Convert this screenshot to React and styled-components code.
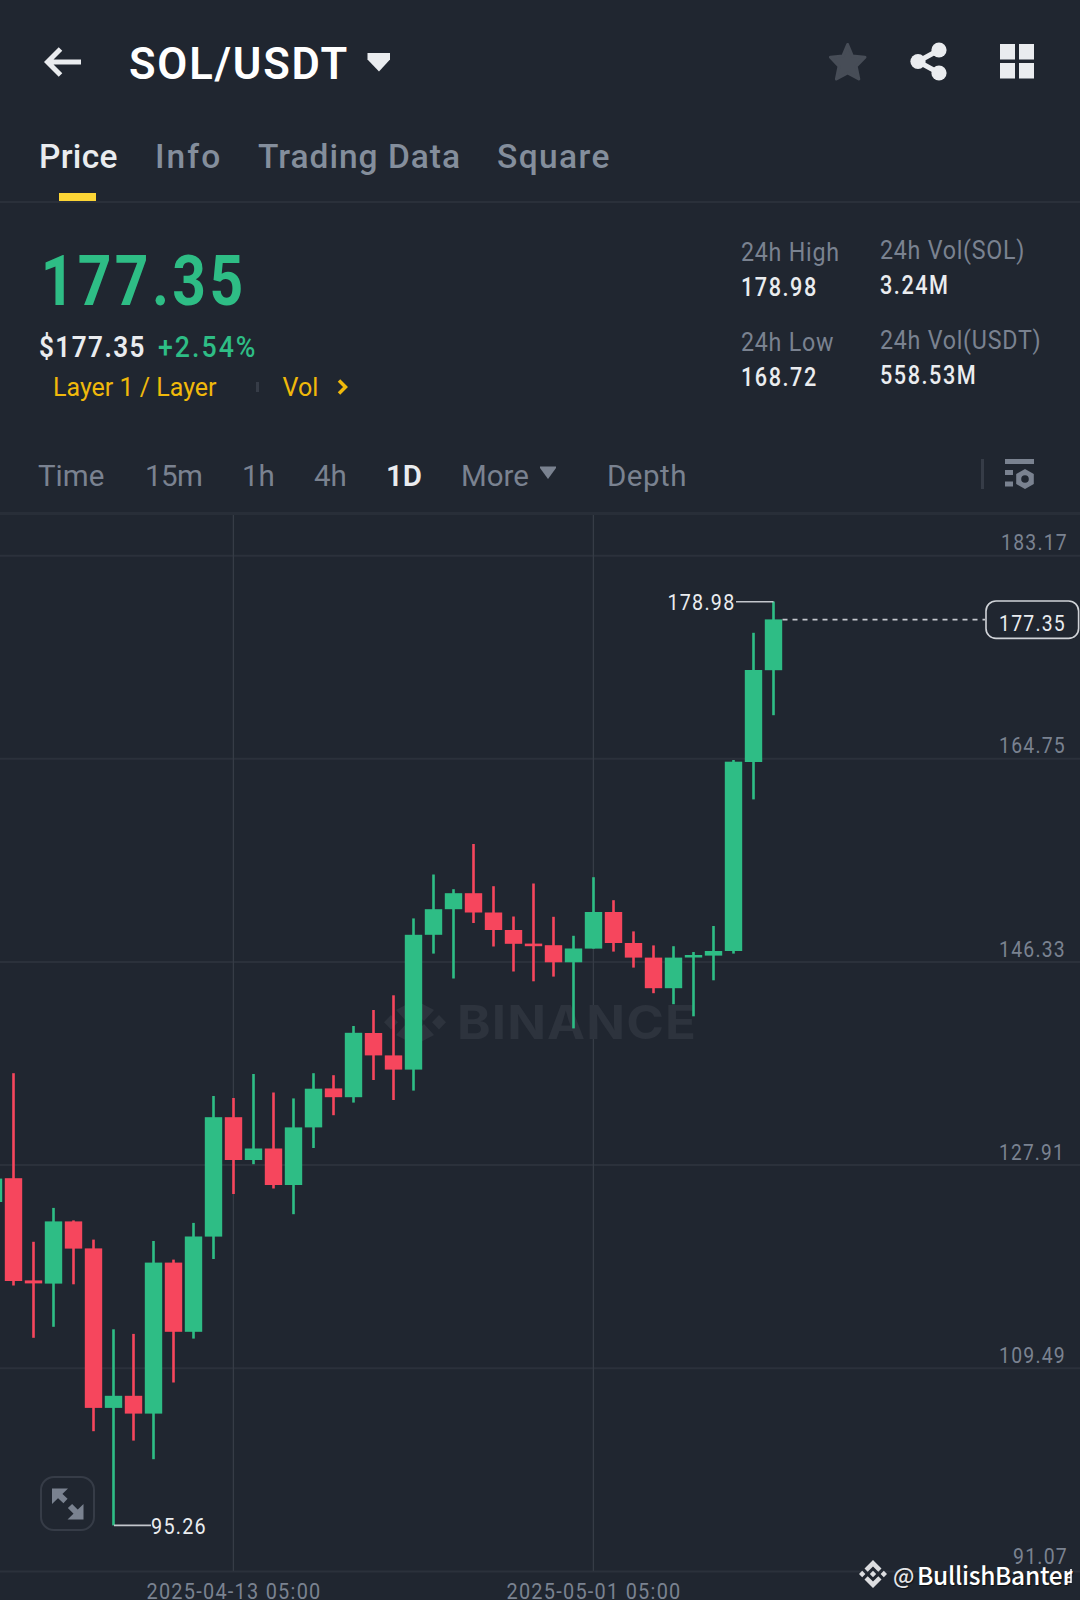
import React from "react";
import styled, { createGlobalStyle } from "styled-components";

const GlobalStyle = createGlobalStyle`
  * {
    box-sizing: border-box;
  }
  body {
    margin: 0;
    background: #202630;
    font-family: Roboto, "Liberation Sans", sans-serif;
    overflow: hidden;
  }
`;

const Page = styled.div`
  width: 1080px;
  height: 1600px;
  overflow: hidden;
  background: #202630;
  color: #eaecef;
`;

// Header
const Header = styled.header`
  display: flex;
  align-items: center;
  height: 124px;
  padding: 0 46px 0 44px;
`;

const Pair = styled.h1`
  margin: 5px 0 0 47px;
  width: 237px;
  font-size: 43.5px;
  font-weight: 600;
  letter-spacing: 1.8px;
  white-space: nowrap;
  color: #ffffff;
`;

const Actions = styled.div`
  display: flex;
  align-items: center;
  margin-left: auto;
`;

const Icon = styled.svg`
  display: block;
  flex: none;
  margin-left: ${props => props.$left || 0}px;
`;

// Tabs
const Tabs = styled.nav`
  display: flex;
  height: 79px;
  padding: 11px 0 0 39px;
  border-bottom: 2px solid #2a303a;
`;

const Tab = styled.div`
  width: ${props => props.$width}px;
  height: 67px;
  font-size: 33.5px;
  line-height: 44px;
  font-weight: 500;
  letter-spacing: ${props => props.$spacing}px;
  white-space: nowrap;
  color: ${props => (props.$active ? "#eaecef" : "#848e9c")};
`;

const Underline = styled.div`
  width: 37px;
  height: 8px;
  margin: 14px 0 0 20px;
  background: #fcd535;
`;

// Price summary
const Summary = styled.section`
  display: flex;
  justify-content: space-between;
  height: 233px;
  padding: 30px 0 0 39px;
`;

const LastPrice = styled.div`
  height: 88px;
  padding-left: 2px;
  font-size: 69.5px;
  line-height: 97px;
  font-weight: 700;
  letter-spacing: 4px;
  color: #2ebd85;
  transform: scaleX(0.845);
  transform-origin: left;
`;

const SubPrice = styled.div`
  display: flex;
  height: 41px;
  line-height: 52px;
  font-size: 29px;
`;

const Fiat = styled.span`
  width: 119px;
  font-weight: 600;
  letter-spacing: 1.6px;
  transform: scaleX(0.9);
  transform-origin: left;
`;

const Change = styled.span`
  font-weight: 500;
  letter-spacing: 2.2px;
  color: #2ebd85;
  transform: scaleX(0.92);
  transform-origin: left;
`;

const Tags = styled.div`
  display: flex;
  align-items: center;
  height: 50px;
  padding-left: 14px;
  font-size: 25px;
  color: #f0b90b;
`;

const TagDivider = styled.div`
  width: 3px;
  height: 10px;
  margin: 0 24px 0 39px;
  background: #363c47;
`;

const Stats = styled.div`
  display: flex;
`;

const StatColumn = styled.div`
  width: ${props => props.$width}px;
  margin-top: ${props => props.$top}px;
`;

const Stat = styled.div`
  height: 90px;
  white-space: nowrap;
`;

const StatLabel = styled.div`
  font-size: 25px;
  line-height: 35px;
  letter-spacing: 0.8px;
  color: #7a8290;
  transform: scaleX(0.93);
  transform-origin: left;
`;

const StatValue = styled.div`
  font-size: 25px;
  line-height: 35px;
  font-weight: 500;
  letter-spacing: 1.8px;
  transform: scaleX(0.865);
  transform-origin: left;
`;

// Interval bar
const Intervals = styled.div`
  display: flex;
  align-items: center;
  height: 79px;
  padding: 0 46px 0 38px;
  border-bottom: 3px solid #282e38;
`;

const Interval = styled.div`
  width: ${props => props.$width}px;
  margin-left: ${props => props.$left || 0}px;
  padding-top: 3px;
  font-size: 29.5px;
  line-height: 40px;
  letter-spacing: ${props => props.$spacing || 0}px;
  font-weight: ${props => (props.$active ? 600 : 400)};
  color: ${props => (props.$active ? "#eaecef" : "#7a8290")};
`;

const BarDivider = styled.div`
  width: 3px;
  height: 30px;
  margin: 0 21px 0 auto;
  background: #363c47;
`;

// Chart
const ChartArea = styled.main`
  position: relative;
  height: 1085px;
`;

const ChartSvg = styled.svg`
  display: block;
`;

const Expand = styled.button`
  position: absolute;
  left: 40px;
  top: 961px;
  width: 55px;
  height: 55px;
  padding: 0;
  display: flex;
  align-items: center;
  justify-content: center;
  border: 2px solid #363c47;
  border-radius: 14px;
  background: transparent;
`;

const Signature = styled.div`
  position: absolute;
  left: 859px;
  top: 1041px;
  display: flex;
  align-items: center;
  height: 36px;
  white-space: nowrap;
  color: #ffffff;
  font-family: "Noto Sans CJK SC", "Noto Sans", sans-serif;
  font-size: 24.5px;
  font-weight: 500;
  text-shadow: 1px 1px 1px rgba(0, 0, 0, 0.6);
`;

const At = styled.span`
  width: 24px;
  margin-left: 6px;
  font-size: 22px;
  color: #e4e5e7;
`;

const Author = styled.span`
  position: relative;
  letter-spacing: -0.3px;
`;

const TailMark = styled.svg`
  position: absolute;
  right: 0;
  top: 12px;
`;

const UP = "#2ebd85";
const DOWN = "#f6465d";
const CHART_TOP = 515;

// [direction, high, body top, body bottom, low], one entry per day
const candles = [
  [1, 1178.6, 1178.6, 1202, 1202],
  [0, 1073.2, 1178.2, 1281, 1285.5],
  [0, 1241.8, 1280.4, 1283.4, 1337.8],
  [1, 1207.9, 1221.4, 1283.6, 1326.8],
  [0, 1220.4, 1221.4, 1248.6, 1284.3],
  [0, 1239.6, 1248.4, 1407.9, 1431.2],
  [1, 1329.3, 1395.8, 1407.9, 1525.4],
  [0, 1333.9, 1395.8, 1413.6, 1440.6],
  [1, 1241, 1262.6, 1413.6, 1459.2],
  [0, 1259.6, 1262.6, 1331.8, 1382.5],
  [1, 1222.9, 1236.5, 1331.8, 1338.6],
  [1, 1096, 1117.2, 1236.6, 1259],
  [0, 1098, 1117.2, 1160, 1194],
  [1, 1074, 1148.5, 1160, 1164.2],
  [0, 1092.5, 1148.5, 1185, 1188.5],
  [1, 1098.4, 1127.4, 1185, 1214.2],
  [1, 1073.2, 1088.7, 1127.4, 1148],
  [0, 1075.2, 1088.4, 1097.2, 1115.2],
  [1, 1026, 1032.8, 1097.2, 1102.6],
  [0, 1010, 1033, 1055.4, 1080],
  [0, 995.3, 1055.4, 1069.6, 1100],
  [1, 918.4, 934.8, 1069.6, 1090.6],
  [1, 874.5, 909.2, 934.8, 953.6],
  [1, 889.2, 893.2, 909.2, 978.5],
  [0, 844, 893.2, 912.5, 923],
  [0, 886.2, 912.5, 930, 946.5],
  [0, 916.5, 930, 943.8, 971.5],
  [0, 883.5, 943.6, 946.2, 981.3],
  [0, 916.8, 945.2, 962.3, 976.6],
  [1, 935.8, 948.5, 962.3, 1028.4],
  [1, 877.2, 912, 948.6, 948.6],
  [0, 900.2, 912, 943, 951.6],
  [0, 931.4, 943, 957.6, 967.6],
  [0, 945.4, 957.6, 988.2, 993.2],
  [1, 946.2, 957.6, 988.2, 1004.2],
  [1, 952, 955, 957.5, 1016.3],
  [1, 926, 951, 955.6, 980.3],
  [1, 760, 761.7, 951, 953.6],
  [1, 632.8, 670, 762, 799.4],
  [1, 601.5, 619.4, 670.2, 715.2]
];

const priceAxis = [
  { price: "183.17", grid: 555.7, x: 1001, y: 550.2, width: 67 },
  { price: "164.75", grid: 758.8, x: 999, y: 753.2, width: 67 },
  { price: "146.33", grid: 962, x: 999, y: 957, width: 67 },
  { price: "127.91", grid: 1165, x: 999, y: 1160.2, width: 66 },
  { price: "109.49", grid: 1368.2, x: 999, y: 1363.2, width: 67 },
  { price: "91.07", grid: 1571.4, x: 1013, y: 1564.2, width: 55 }
];

const dateAxis = [
  { label: "2025-04-13 05:00", grid: 233.4, x: 146.5 },
  { label: "2025-05-01 05:00", grid: 593.4, x: 506.5 }
];

function ChartText({ x, y, width, fill, size = 22, weight = 400, children }) {
  return (
    <text
      x={x}
      y={y}
      fill={fill}
      fontSize={size}
      fontWeight={weight}
      textLength={width}
      lengthAdjust="spacingAndGlyphs"
      letterSpacing="1.4"
    >
      {children}
    </text>
  );
}

function Chart() {
  return (
    <ChartSvg
      width="1080"
      height="1085"
      viewBox={`0 ${CHART_TOP} 1080 1085`}
      fontFamily="Roboto, sans-serif"
    >
      <g stroke="#2b313b" strokeWidth="2">
        {priceAxis.map(row => (
          <line key={row.price} x1="0" x2="1080" y1={row.grid} y2={row.grid} />
        ))}
        {dateAxis.map(col => (
          <line
            key={col.label}
            x1={col.grid}
            x2={col.grid}
            y1={CHART_TOP}
            y2="1571"
            stroke="#363c46"
            strokeWidth="1.3"
          />
        ))}
      </g>

      {/* brand watermark */}
      <g fill="#2d333d">
        <path d="M415 1000 L434 1010 L424 1021 L415 1012 L406 1021 L396 1010 Z" />
        <path d="M415 1045 L434 1035 L424 1024 L415 1033 L406 1024 L396 1035 Z" />
        <path d="M391 1015 L398 1022.3 L391 1029.5 L384 1022.3 Z" />
        <path d="M439 1015 L446 1022.3 L439 1029.5 L432 1022.3 Z" />
        <text
          x="457"
          y="1039.3"
          fontFamily="Inter, sans-serif"
          fontSize="46.5"
          fontWeight="700"
          letterSpacing="1"
          textLength="240"
          lengthAdjust="spacingAndGlyphs"
        >
          BINANCE
        </text>
      </g>

      {candles.map(([up, high, top, bottom, low], i) => {
        const x = 13.5 + (i - 1) * 20;
        return (
          <g key={i} fill={up ? UP : DOWN}>
            <rect x={x - 1.3} y={high} width="2.6" height={low - high} />
            <rect x={x - 8.7} y={top} width="17.4" height={bottom - top} />
          </g>
        );
      })}

      {/* highest, lowest and last price marks */}
      <path
        d="M736 601.8 H773.5 M114 1525.4 H151"
        stroke="#c3c6cc"
        strokeWidth="1.6"
      />
      <ChartText x={667.5} y={610.2} width={68} fill="#eaecef">
        178.98
      </ChartText>
      <ChartText x={151} y={1534} width={56} fill="#eaecef">
        95.26
      </ChartText>
      <path
        d="M782.5 619.6 H985"
        stroke="#c3c6cc"
        strokeWidth="1.6"
        strokeDasharray="5 5"
      />
      <rect
        x="986"
        y="601"
        width="92.6"
        height="37.4"
        rx="10"
        fill="#202630"
        stroke="#d0d3d8"
        strokeWidth="1.6"
      />
      <ChartText x={999} y={631} width={67} fill="#eaecef">
        177.35
      </ChartText>

      {priceAxis.map(row => (
        <ChartText
          key={row.price}
          x={row.x}
          y={row.y}
          width={row.width}
          fill="#7a8290"
        >
          {row.price}
        </ChartText>
      ))}
      {dateAxis.map(col => (
        <ChartText
          key={col.label}
          x={col.x}
          y={1599}
          width={175}
          fill="#7a8290"
        >
          {col.label}
        </ChartText>
      ))}
    </ChartSvg>
  );
}

function App() {
  return (
    <Page>
      <GlobalStyle />
      <Header>
        <Icon width="38" height="32" viewBox="0 0 38 32" fill="none">
          <path
            d="M37 16 H4 M16.5 3 L3.5 16 L16.5 29"
            stroke="#eaecef"
            strokeWidth="5"
          />
        </Icon>
        <Pair>SOL/USDT</Pair>
        <Icon width="24" height="19" viewBox="0 0 24 19" $left={1}>
          <path d="M0.5 0 H23 V6.5 L12 18.5 L0.5 6.5 Z" fill="#eaecef" />
        </Icon>
        <Actions>
          <Icon width="38" height="40" viewBox="0 0 38 40">
            <path
              d="M18.6 2.5 L23.4 14 L36 15.2 L27.2 24.2 L29.8 37 L18.6 31 L7.4 37 L10 24.2 L1.5 15.2 L13.8 14 Z"
              fill="#474d57"
              stroke="#474d57"
              strokeWidth="3"
              strokeLinejoin="round"
            />
          </Icon>
          <Icon width="38" height="40" viewBox="0 0 38 40" $left={43}>
            <path
              d="M29 8 L8 19.5 L29 31"
              fill="none"
              stroke="#eaecef"
              strokeWidth="5"
            />
            <circle cx="29" cy="8" r="7.6" fill="#eaecef" />
            <circle cx="8" cy="19.5" r="7.6" fill="#eaecef" />
            <circle cx="29" cy="31" r="7.6" fill="#eaecef" />
          </Icon>
          <Icon width="34" height="36" viewBox="0 0 34 36" $left={52}>
            <path
              d="M0 0 H15 V15.5 H0 Z M19 0 H34 V15.5 H19 Z M0 19 H15 V34.5 H0 Z M19 19 H34 V34.5 H19 Z"
              fill="#eaecef"
            />
          </Icon>
        </Actions>
      </Header>

      <Tabs>
        <Tab $active $width={116} $spacing={0.3}>
          Price
          <Underline />
        </Tab>
        <Tab $width={103} $spacing={2.1}>
          Info
        </Tab>
        <Tab $width={239} $spacing={1}>
          Trading Data
        </Tab>
        <Tab $width={120} $spacing={1.4}>
          Square
        </Tab>
      </Tabs>

      <Summary>
        <div>
          <LastPrice>177.35</LastPrice>
          <SubPrice>
            <Fiat>$177.35</Fiat>
            <Change>+2.54%</Change>
          </SubPrice>
          <Tags>
            <span>Layer 1 / Layer</span>
            <TagDivider />
            <span>Vol</span>
            <Icon width="12" height="16" viewBox="0 0 12 16" $left={19}>
              <path
                d="M2 1.5 L8.5 8 L2 14.5"
                fill="none"
                stroke="#f0b90b"
                strokeWidth="3.5"
              />
            </Icon>
          </Tags>
        </div>
        <Stats>
          <StatColumn $width={139} $top={2}>
            <Stat>
              <StatLabel>24h High</StatLabel>
              <StatValue>178.98</StatValue>
            </Stat>
            <Stat>
              <StatLabel>24h Low</StatLabel>
              <StatValue>168.72</StatValue>
            </Stat>
          </StatColumn>
          <StatColumn $width={200} $top={0}>
            <Stat>
              <StatLabel>24h Vol(SOL)</StatLabel>
              <StatValue>3.24M</StatValue>
            </Stat>
            <Stat>
              <StatLabel>24h Vol(USDT)</StatLabel>
              <StatValue>558.53M</StatValue>
            </Stat>
          </StatColumn>
        </Stats>
      </Summary>

      <Intervals>
        <Interval $width={107}>Time</Interval>
        <Interval $width={97} $spacing={-0.6}>
          15m
        </Interval>
        <Interval $width={72}>1h</Interval>
        <Interval $width={72}>4h</Interval>
        <Interval $width={75} $active>
          1D
        </Interval>
        <Interval $width={79}>More</Interval>
        <Icon width="16" height="17" viewBox="0 0 16 17">
          <path d="M0 0.5 H16 V2 L8 13 L0 2 Z" fill="#7a8290" />
        </Icon>
        <Interval $width={132} $left={51} $spacing={0.5}>
          Depth
        </Interval>
        <BarDivider />
        <Icon width="29" height="31" viewBox="0 0 29 31">
          <g fill="#7a8290">
            <path d="M0 0 H29 V5 H0 Z M0 11 H8 V16 H0 Z M0 22.5 H8 V27.5 H0 Z" />
            <path
              fillRule="evenodd"
              d="M20 10 L28.8 15 V25 L20 30 L11.2 25 V15 Z M20 16.2 A3.8 3.8 0 1 0 20 23.8 A3.8 3.8 0 1 0 20 16.2 Z"
            />
          </g>
        </Icon>
      </Intervals>

      <ChartArea>
        <Chart />
        <Expand>
          <Icon width="32" height="32" viewBox="0 0 32 32" fill="#7a8290">
            <path d="M0 0.5 H16 L0 16 Z M31.5 31.5 H15.5 L31.5 16 Z" />
            <path
              d="M5 5 L13.5 13 M18 18 L27 27"
              stroke="#7a8290"
              strokeWidth="6"
            />
          </Icon>
        </Expand>
        <Signature>
          <Icon width="28" height="28" viewBox="0 0 28 28" fill="#dcdde0">
            <path d="M14 0 L22.5 8.5 L19.3 11.7 L14 6.4 L8.7 11.7 L5.5 8.5 Z" />
            <path d="M14 28 L22.5 19.5 L19.3 16.3 L14 21.6 L8.7 16.3 L5.5 19.5 Z" />
            <path d="M3.2 10.8 L6.4 14 L3.2 17.2 L0 14 Z M24.8 10.8 L28 14 L24.8 17.2 L21.6 14 Z M14 10.8 L17.2 14 L14 17.2 L10.8 14 Z" />
          </Icon>
          <At>@</At>
          <Author>
            BullishBanter
            <TailMark width="7" height="14" viewBox="0 0 7 14">
              <path
                d="M6 0 V14 M0 4.5 H6 M0 8.5 H6 M0 13 H6"
                stroke="#ffffff"
                strokeWidth="1.5"
              />
            </TailMark>
          </Author>
        </Signature>
      </ChartArea>
    </Page>
  );
}

export default App;
